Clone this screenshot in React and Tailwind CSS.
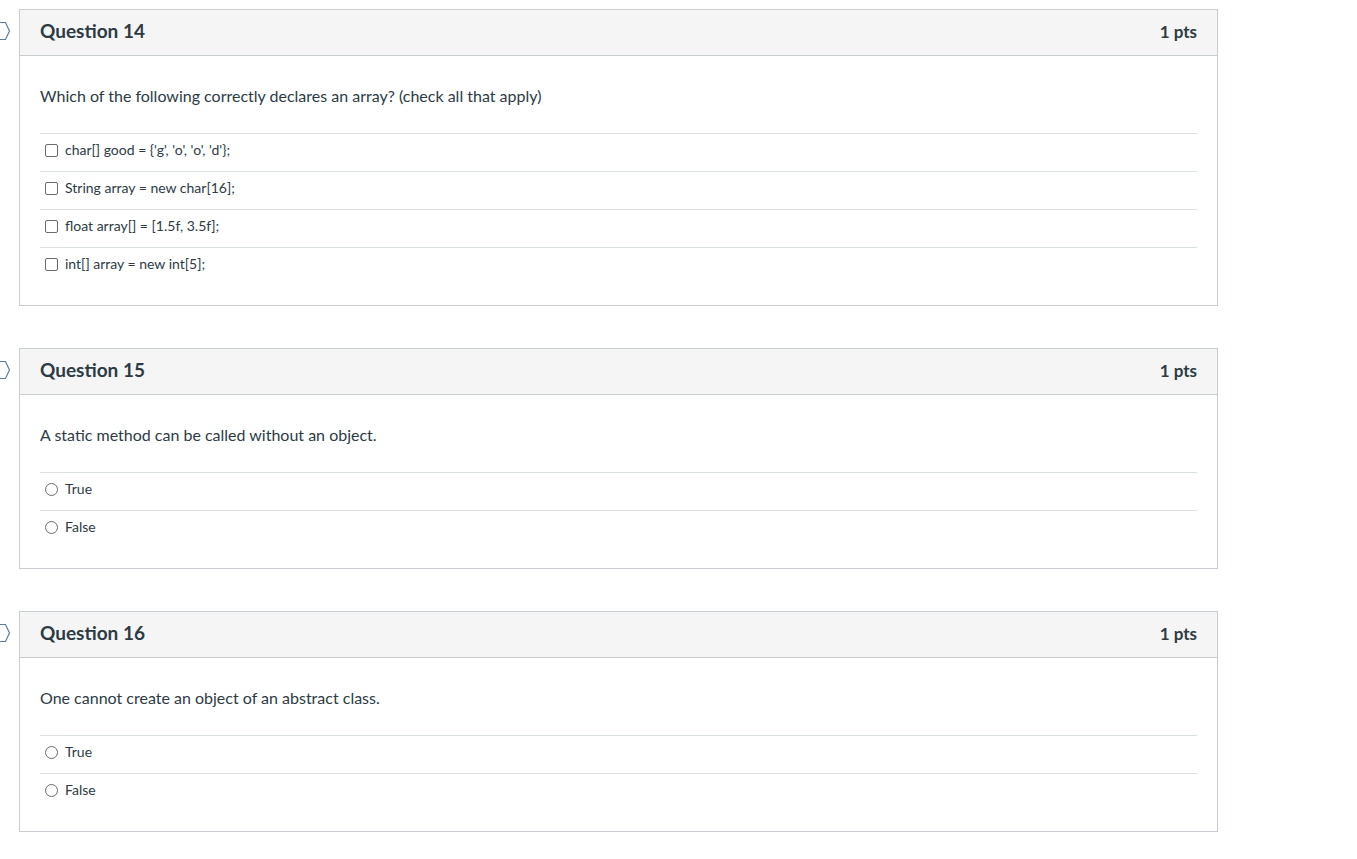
const questions = [
  {
    number: 14,
    points: '1 pts',
    text: 'Which of the following correctly declares an array? (check all that apply)',
    type: 'checkbox',
    options: [
      "char[] good = {'g', 'o', 'o', 'd'};",
      'String array = new char[16];',
      'float array[] = [1.5f, 3.5f];',
      'int[] array = new int[5];',
    ],
  },
  {
    number: 15,
    points: '1 pts',
    text: 'A static method can be called without an object.',
    type: 'radio',
    options: ['True', 'False'],
  },
  {
    number: 16,
    points: '1 pts',
    text: 'One cannot create an object of an abstract class.',
    type: 'radio',
    options: ['True', 'False'],
  },
];

function FlagMarker() {
  return (
    <svg width="19" height="20" viewBox="0 0 19 20" className="shrink-0 mt-[12px]">
      <path d="M-2 1.5 H5.5 L9.5 10 L5.5 18.5 H-2" fill="none" stroke="#5b7d99" strokeWidth="1.2" />
    </svg>
  );
}

function OptionMark({ type }) {
  if (type === 'checkbox') {
    return <span className="inline-block w-[13px] h-[13px] rounded-[2px] border border-[#6b6b6b] bg-white shrink-0" />;
  }
  return <span className="inline-block w-[13px] h-[13px] rounded-full border border-[#6b6b6b] bg-white shrink-0" />;
}

function QuestionCard({ q }) {
  return (
    <div className="flex items-start">
      <FlagMarker />
      <div className="w-[1199px] border border-[#c7cdd1] bg-white">
        <div className="h-[46px] bg-[#f5f5f5] border-b border-[#c7cdd1] flex items-center justify-between px-[20px] pb-[4px]">
          <h2 className="text-[19px] font-bold text-[#2d3b45] leading-none">Question {q.number}</h2>
          <span className="text-[17px] font-bold text-[#2d3b45] leading-none mt-[2px]">{q.points}</span>
        </div>
        <div className="px-[20px] pt-[28px] pb-[20px]">
          <p className="text-[16px] leading-[24px] text-[#2d3b45]">{q.text}</p>
          <div className="mt-[25px]">
            {q.options.map((opt) => (
              <label key={opt} className="flex items-center gap-[7px] border-t border-[#dde0e2] pl-[5px] pt-[6px] pb-[11px] leading-[20px] text-[14px] text-[#2d3b45]">
                <OptionMark type={q.type} />
                <span>{opt}</span>
              </label>
            ))}
          </div>
        </div>
      </div>
    </div>
  );
}

export default function App() {
  return (
    <div className="min-h-screen bg-white pt-[9px] flex flex-col gap-[42px]" style={{ fontFamily: 'Lato, "Liberation Sans", sans-serif' }}>
      {questions.map((q) => (
        <QuestionCard key={q.number} q={q} />
      ))}
    </div>
  );
}
